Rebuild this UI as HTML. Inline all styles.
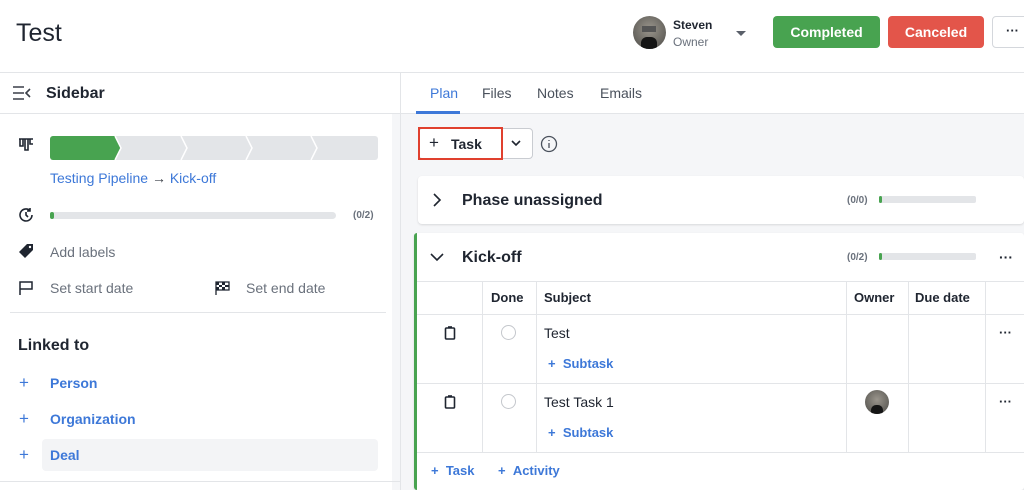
<!DOCTYPE html>
<html><head><style>
*{box-sizing:border-box;margin:0;padding:0}
body{width:1024px;height:490px;overflow:hidden;background:#fff;font-family:"Liberation Sans",sans-serif;color:#1f2530;position:relative}
.a{position:absolute}
.blue{color:#3d78d8}
.gray{color:#6a717c}
.btn{position:absolute;top:16px;height:32px;border-radius:4px;color:#fff;font-weight:bold;font-size:14px;text-align:center;line-height:32px}
.hl{position:absolute;background:#e3e5e8}
.ic{position:absolute}
</style></head><body>
<div class="a" style="left:16px;top:19px;font-size:25px">Test</div>
<div class="a" style="left:633px;top:16px;width:33px;height:33px;border-radius:50%;background:radial-gradient(circle at 50% 40%,#9a958c,#4b4a46);overflow:hidden"><div style="position:absolute;left:9px;top:10px;width:14px;height:6px;background:#555"></div><div style="position:absolute;left:8px;top:21px;width:16px;height:14px;border-radius:6px 6px 0 0;background:#151515"></div></div>
<div class="a" style="left:673px;top:18px;font-size:12px;font-weight:bold">Steven</div>
<div class="a gray" style="left:673px;top:35px;font-size:12px">Owner</div>
<div class="a" style="left:736px;top:31px;width:0;height:0;border-left:5px solid transparent;border-right:5px solid transparent;border-top:5px solid #5a606a"></div>
<div class="btn" style="left:773px;width:107px;background:#48a350">Completed</div>
<div class="btn" style="left:888px;width:96px;background:#e3554a">Canceled</div>
<div class="a" style="left:992px;top:16px;width:40px;height:32px;border:1px solid #d4d7dc;border-radius:4px;text-align:left;padding-left:13px;line-height:28px;font-weight:bold;font-size:13px">···</div>
<div class="hl" style="left:0;top:72px;width:1024px;height:1px"></div>
<div class="hl" style="left:400px;top:73px;width:1px;height:417px"></div>
<div class="hl" style="left:0;top:113px;width:400px;height:1px"></div>
<div class="a" style="left:392px;top:114px;width:8px;height:376px;background:#f5f6f8"></div>
<!-- sidebar -->
<svg class="ic" style="left:12px;top:86px" width="20" height="14" viewBox="0 0 20 14" stroke="#3a3f48" stroke-width="1.6" fill="none"><path d="M1 1h11M1 7h11M1 13h11M18 3l-4 4 4 4"/></svg>
<div class="a" style="left:46px;top:85px;font-size:16px;font-weight:bold">Sidebar</div>
<svg class="ic" style="left:18px;top:138px" width="16" height="14" viewBox="0 0 16 14" fill="none" stroke="#1f2530" stroke-width="1.6"><path d="M1 1h14M2 1v7h3V1M7 1v11h3V1M12 1v5h3"/></svg>
<svg class="a" style="left:50px;top:136px" width="328" height="24"><rect width="328" height="24" rx="3" fill="#e3e5e8"/><path d="M3 0H65L71 12 65 24H3A3 3 0 0 1 0 21V3A3 3 0 0 1 3 0Z" fill="#48a350"/><path d="M65 0l6 12-6 12M131 0l6 12-6 12M196 0l6 12-6 12M261 0l6 12-6 12" stroke="#fff" stroke-width="1.5" fill="none"/></svg>
<div class="a blue" style="left:50px;top:170px;font-size:14px">Testing Pipeline <span style="color:#3a3f48">→</span> Kick-off</div>
<svg class="ic" style="left:18px;top:207px" width="16" height="16" viewBox="0 0 16 16" fill="none" stroke="#1f2530" stroke-width="1.6"><path d="M14 8A6 6 0 1 1 12 3.5M12 1v3h-3M8 5v3l2 2"/></svg>
<div class="a" style="left:50px;top:212px;width:286px;height:7px;border-radius:4px;background:#e3e5e8"><div style="width:4px;height:7px;border-radius:3px;background:#48a350"></div></div>
<div class="a gray" style="left:353px;top:210px;font-size:10px;font-weight:bold">(0/2)</div>
<svg class="ic" style="left:18px;top:243px" width="16" height="16" viewBox="0 0 16 16"><path d="M9 1h6v6L7 15 1 9Z" fill="#1f2530"/><circle cx="12" cy="4" r="1.2" fill="#fff"/></svg>
<div class="a gray" style="left:50px;top:244px;font-size:14px">Add labels</div>
<svg class="ic" style="left:18px;top:280px" width="16" height="16" viewBox="0 0 16 16" fill="none" stroke="#1f2530" stroke-width="1.5"><path d="M2 15V2h12v7H2"/></svg>
<div class="a gray" style="left:50px;top:280px;font-size:14px">Set start date</div>
<svg class="ic" style="left:214px;top:280px" width="16" height="16" viewBox="0 0 16 16"><path d="M2 15V2h13v8H2" fill="none" stroke="#1f2530" stroke-width="1.3"/><path d="M2 2h3v3H2zM8 2h3v3H8zM5 5h3v2H5zM11 5h4v2h-4zM2 7h3v3H2zM8 7h3v3H8z" fill="#1f2530"/></svg>
<div class="a gray" style="left:246px;top:280px;font-size:14px">Set end date</div>
<div class="hl" style="left:10px;top:312px;width:376px;height:1px"></div>
<div class="a" style="left:18px;top:337px;font-size:16px;font-weight:bold">Linked to</div>
<div class="a" style="left:42px;top:439px;width:336px;height:32px;border-radius:4px;background:#f3f4f6"></div>
<div class="a blue" style="left:19px;top:373px;font-size:17px">+</div><div class="a blue" style="left:50px;top:375px;font-size:14px;font-weight:bold">Person</div>
<div class="a blue" style="left:19px;top:409px;font-size:17px">+</div><div class="a blue" style="left:50px;top:411px;font-size:14px;font-weight:bold">Organization</div>
<div class="a blue" style="left:19px;top:445px;font-size:17px">+</div><div class="a blue" style="left:50px;top:447px;font-size:14px;font-weight:bold">Deal</div>
<div class="hl" style="left:0;top:481px;width:400px;height:1px"></div>
<!-- right -->
<div class="a" style="left:401px;top:113px;width:623px;height:377px;background:#f5f6f8"></div>
<div class="hl" style="left:401px;top:113px;width:623px;height:1px"></div>
<div class="a" style="left:430px;top:85px;font-size:14px;color:#3d78d8">Plan</div>
<div class="a" style="left:416px;top:111px;width:44px;height:3px;background:#3d78d8"></div>
<div class="a gray" style="left:482px;top:85px;font-size:14px;color:#4a515c">Files</div>
<div class="a gray" style="left:537px;top:85px;font-size:14px;color:#4a515c">Notes</div>
<div class="a gray" style="left:600px;top:85px;font-size:14px;color:#4a515c">Emails</div>
<div class="a" style="left:418px;top:128px;width:115px;height:31px;border:1px solid #c9ccd1;border-radius:4px;background:#fff"></div>
<div class="a" style="left:418px;top:127px;width:85px;height:33px;border:2px solid #e0402e"></div>
<div class="a" style="left:429px;top:133px;font-size:17px">+</div>
<div class="a" style="left:451px;top:136px;font-size:14px;font-weight:bold">Task</div>
<svg class="ic" style="left:510px;top:139px" width="12" height="8" viewBox="0 0 12 8" fill="none" stroke="#1f2530" stroke-width="1.6"><path d="M2 2l4 4 4-4"/></svg>
<svg class="ic" style="left:540px;top:135px" width="18" height="18" viewBox="0 0 18 18" fill="none" stroke="#4a515c" stroke-width="1.3"><circle cx="9" cy="9" r="7.5"/><path d="M9 8v5M9 5v1"/></svg>
<div class="a" style="left:418px;top:176px;width:606px;height:48px;background:#fff;border-radius:4px;box-shadow:0 1px 2px rgba(0,0,0,.12)"></div>
<svg class="ic" style="left:432px;top:193px" width="10" height="14" viewBox="0 0 10 14" fill="none" stroke="#1f2530" stroke-width="1.6"><path d="M2 1l6 6-6 6"/></svg>
<div class="a" style="left:462px;top:192px;font-size:16px;font-weight:bold">Phase unassigned</div>
<div class="a gray" style="left:847px;top:195px;font-size:10px;font-weight:bold">(0/0)</div>
<div class="a" style="left:879px;top:196px;width:97px;height:7px;background:#e3e5e8;border-radius:2px"><div style="width:3px;height:7px;background:#48a350;border-radius:2px"></div></div>
<div class="a" style="left:414px;top:233px;width:610px;height:257px;background:#fff;border-left:3px solid #48a350;border-radius:3px;box-shadow:0 1px 2px rgba(0,0,0,.12)"></div>
<svg class="ic" style="left:430px;top:252px" width="14" height="10" viewBox="0 0 14 10" fill="none" stroke="#1f2530" stroke-width="1.6"><path d="M1 2l6 6 6-6"/></svg>
<div class="a" style="left:462px;top:249px;font-size:16px;font-weight:bold">Kick-off</div>
<div class="a gray" style="left:847px;top:252px;font-size:10px;font-weight:bold">(0/2)</div>
<div class="a" style="left:879px;top:253px;width:97px;height:7px;background:#e3e5e8;border-radius:2px"><div style="width:3px;height:7px;background:#48a350;border-radius:2px"></div></div>
<div class="a" style="left:999px;top:249px;font-size:14px;font-weight:bold">···</div>
<div class="hl" style="left:417px;top:281px;width:607px;height:1px"></div>
<div class="hl" style="left:417px;top:314px;width:607px;height:1px"></div>
<div class="hl" style="left:417px;top:383px;width:607px;height:1px"></div>
<div class="hl" style="left:417px;top:452px;width:607px;height:1px"></div>
<div class="hl" style="left:482px;top:282px;width:1px;height:170px"></div>
<div class="hl" style="left:536px;top:282px;width:1px;height:170px"></div>
<div class="hl" style="left:846px;top:282px;width:1px;height:170px"></div>
<div class="hl" style="left:908px;top:282px;width:1px;height:170px"></div>
<div class="hl" style="left:985px;top:282px;width:1px;height:170px"></div>
<div class="a" style="left:491px;top:290px;font-size:13px;font-weight:bold">Done</div>
<div class="a" style="left:544px;top:290px;font-size:13px;font-weight:bold">Subject</div>
<div class="a" style="left:854px;top:290px;font-size:13px;font-weight:bold">Owner</div>
<div class="a" style="left:915px;top:290px;font-size:13px;font-weight:bold">Due date</div>
<svg class="ic" style="left:444px;top:326px" width="12" height="14" viewBox="0 0 12 14" fill="none" stroke="#1f2530" stroke-width="1.6"><rect x="1.5" y="2" width="9" height="11" rx="1"/><path d="M4 1h4"/></svg>
<div class="a" style="left:501px;top:325px;width:15px;height:15px;border:1.5px solid #c4c7cc;border-radius:50%"></div>
<div class="a" style="left:544px;top:325px;font-size:14px">Test</div>
<div class="a blue" style="left:548px;top:356px;font-size:13px;font-weight:bold">+ &nbsp;Subtask</div>
<div class="a" style="left:999px;top:325px;font-size:13px;font-weight:bold">···</div>
<svg class="ic" style="left:444px;top:395px" width="12" height="14" viewBox="0 0 12 14" fill="none" stroke="#1f2530" stroke-width="1.6"><rect x="1.5" y="2" width="9" height="11" rx="1"/><path d="M4 1h4"/></svg>
<div class="a" style="left:501px;top:394px;width:15px;height:15px;border:1.5px solid #c4c7cc;border-radius:50%"></div>
<div class="a" style="left:544px;top:394px;font-size:14px">Test Task 1</div>
<div class="a" style="left:865px;top:390px;width:24px;height:24px;border-radius:50%;background:radial-gradient(circle at 50% 40%,#9a958c,#4b4a46);overflow:hidden"><div style="position:absolute;left:6px;top:15px;width:12px;height:10px;border-radius:5px 5px 0 0;background:#151515"></div></div>
<div class="a blue" style="left:548px;top:425px;font-size:13px;font-weight:bold">+ &nbsp;Subtask</div>
<div class="a" style="left:999px;top:394px;font-size:13px;font-weight:bold">···</div>
<div class="a blue" style="left:431px;top:463px;font-size:13px;font-weight:bold">+ &nbsp;Task</div>
<div class="a blue" style="left:498px;top:463px;font-size:13px;font-weight:bold">+ &nbsp;Activity</div>
</body></html>
